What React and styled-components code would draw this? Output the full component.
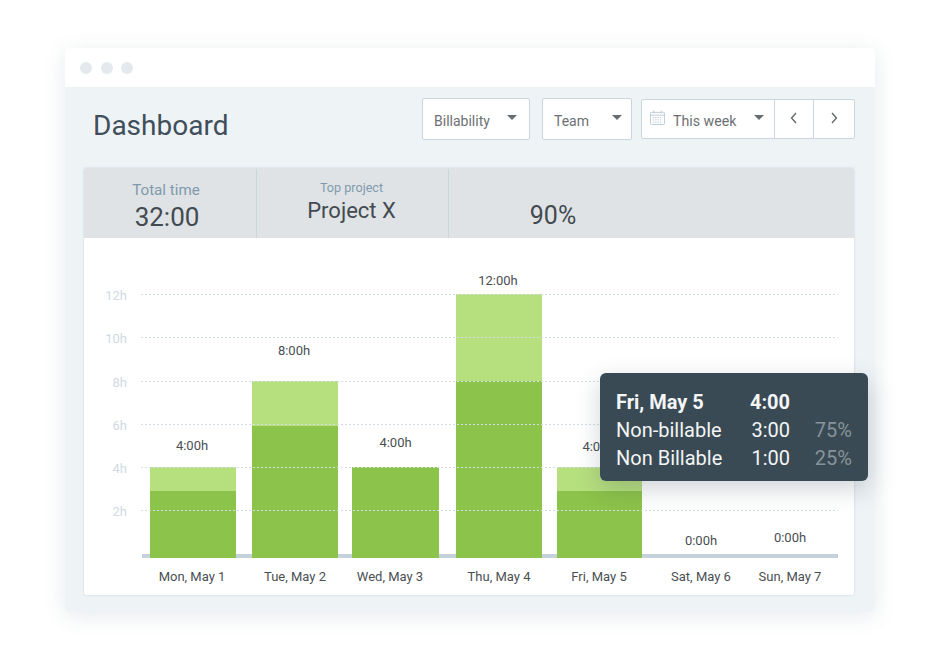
import React from "react";
import styled, { createGlobalStyle } from "styled-components";

const GlobalStyle = createGlobalStyle`
  html, body {
    margin: 0;
    padding: 0;
    background: #fff;
    font-family: Roboto, "Liberation Sans", sans-serif;
  }
  * { box-sizing: border-box; }
`;

const Page = styled.div`
  width: 940px;
  height: 661px;
  padding: 48px 65px 0;
`;

const Window = styled.div`
  width: 810px;
  height: 564px;
  background: #eef3f6;
  border-radius: 5px;
  box-shadow: 0 4px 22px rgba(60, 90, 110, 0.13);
`;

const TitleBar = styled.div`
  height: 39px;
  background: #fff;
  border-radius: 5px 5px 0 0;
  display: flex;
  align-items: center;
  gap: 8.5px;
  padding: 1px 0 0 15px;
`;

const Dot = styled.span`
  width: 12px;
  height: 12px;
  border-radius: 50%;
  background: #e4e9ee;
`;

const Header = styled.div`
  height: 81px;
  display: flex;
  align-items: flex-start;
  padding: 11px 20px 0 28px;
`;

const Title = styled.h1`
  margin: 10px auto 0 0;
  font-size: 28px;
  line-height: 36px;
  font-weight: 400;
  color: #3f4e5a;
`;

const Select = styled.div`
  width: ${(p) => p.$width}px;
  height: 42px;
  margin-left: ${(p) => p.$gap}px;
  padding: 0 ${(p) => p.$pad}px 0 11px;
  display: flex;
  align-items: center;
  justify-content: space-between;
  background: #fff;
  border: 1px solid #c9d6de;
  border-radius: 2px;
  font-size: 14px;
  color: #6c7073;
`;

const SelectText = styled.span`
  margin-top: 4px;
`;

const Caret = styled.span`
  width: 0;
  height: 0;
  margin-top: -3px;
  border-left: 5px solid transparent;
  border-right: 5px solid transparent;
  border-top: 5px solid #666c70;
`;

const WeekGroup = styled.div`
  width: 214px;
  height: 40px;
  margin: 1px 0 0 9px;
  display: flex;
  background: #fff;
  border: 1px solid #c9d6de;
  border-radius: 2px;
  font-size: 14.2px;
  color: #6c7073;
`;

const WeekPicker = styled.div`
  flex: 1;
  display: flex;
  align-items: center;
  padding: 0 10px 0 8px;
  gap: 8px;
`;

const WeekText = styled.span`
  margin: 3px auto 0 0;
`;

const IconSlot = styled.span`
  display: flex;
  margin-top: -3px;
`;

const NavButton = styled.div`
  width: ${(p) => p.$width}px;
  display: flex;
  align-items: center;
  justify-content: center;
  border-left: 1px solid #c9d6de;
  padding-bottom: 2px;
`;

const Panel = styled.div`
  position: relative;
  width: 770px;
  height: 427px;
  margin-left: 19px;
  background: #fff;
  box-shadow: 0 0 2px rgba(120, 150, 170, 0.45);
  border-radius: 2px;
`;

const StatsBand = styled.div`
  height: 70px;
  display: flex;
  background: #dfe3e6;
  border-radius: 2px 2px 0 0;
`;

const StatCell = styled.div`
  width: ${(p) => p.$width}px;
  height: 69px;
  margin-top: 1px;
  border-right: ${(p) => (p.$last ? "none" : "1px solid #c9d6e0")};
  display: flex;
  flex-direction: column;
  align-items: center;
  padding-top: ${(p) => p.$top}px;
  padding-right: ${(p) => p.$inset || 0}px;
`;

const StatLabel = styled.div`
  font-size: ${(p) => p.$size}px;
  line-height: 18px;
  color: #7f9aad;
  margin-right: ${(p) => p.$nudge || 0}px;
`;

const StatValue = styled.div`
  font-size: ${(p) => p.$size}px;
  line-height: 30px;
  color: #434a4f;
  margin-top: ${(p) => p.$top || 0}px;
`;

const Chart = styled.div`
  position: relative;
  height: 357px;
`;

const GridOverlay = styled.div`
  position: absolute;
  z-index: 2;
  left: 0;
  top: 56px;
  width: 754px;
  display: flex;
  flex-direction: column;
  pointer-events: none;
`;

const GridRow = styled.div`
  height: 43.3px;
  display: flex;
  align-items: flex-start;
`;

const GridLabel = styled.span`
  width: 43px;
  margin-top: -7px;
  line-height: 18px;
  text-align: right;
  font-size: 13px;
  color: #cfdae2;
`;

const GridLine = styled.span`
  flex: 1;
  margin-left: 14px;
  height: 1px;
  background: repeating-linear-gradient(to right, #d3dde4 0 2px, transparent 2px 4px);
`;

const BaseLine = styled.div`
  position: absolute;
  left: 58px;
  top: 316px;
  width: 696px;
  height: 4px;
  background: #c5d2dc;
`;

const Columns = styled.div`
  position: relative;
  height: 357px;
  display: flex;
  padding-left: 66px;
`;

const Column = styled.div`
  width: ${(p) => p.$width}px;
  margin-left: ${(p) => p.$gap}px;
  display: flex;
  flex-direction: column;
  justify-content: flex-end;
  align-items: center;
  padding-bottom: 37px;
`;

const ValueLabel = styled.div`
  font-size: 13px;
  line-height: 18px;
  color: #4a4f53;
  margin-bottom: ${(p) => p.$lift}px;
  margin-right: ${(p) => p.$nudge}px;
`;

const BarSegment = styled.div`
  width: 100%;
  height: ${(p) => p.$height}px;
  background: ${(p) => (p.$light ? "#b6df7e" : "#8cc34a")};
`;

const DayLabel = styled.div`
  position: absolute;
  top: 330px;
  left: ${(p) => p.$center}px;
  font-size: 13px;
  line-height: 18px;
  color: #4a4f53;
  white-space: nowrap;
  transform: translateX(-50%);
`;

const Tooltip = styled.div`
  position: absolute;
  z-index: 3;
  left: 516px;
  top: 205px;
  width: 268px;
  height: 108px;
  padding: 15px 16px 0;
  display: grid;
  grid-template-columns: 118px 56px 62px;
  grid-auto-rows: 28px;
  align-items: center;
  background: #394a54;
  border-radius: 6px;
  box-shadow: 0 8px 24px rgba(40, 60, 75, 0.22);
  font-size: 20px;
  color: #f3f5f6;
`;

const TipCell = styled.span`
  font-weight: ${(p) => (p.$bold ? 700 : 400)};
  text-align: ${(p) => (p.$right ? "right" : "left")};
  color: ${(p) => (p.$muted ? "#87939a" : "inherit")};
  white-space: nowrap;
`;

const CalendarIcon = () => (
  <svg width="15" height="15" viewBox="0 0 16 16" fill="none" stroke="#b9cbd8" strokeWidth="1">
    <rect x="0.5" y="2.5" width="15" height="13" rx="1" />
    <path d="M0.5 5.5h15M4 0.5v3M12 0.5v3" />
    <path d="M3 8h10M3 10.5h10M3 13h10" strokeDasharray="1.5 1" />
  </svg>
);

const Chevron = ({ d }) => (
  <svg width="8" height="12" viewBox="0 0 8 12" fill="none" stroke="#5e6468" strokeWidth="1.3">
    <path d={d} />
  </svg>
);

const hours = ["12h", "10h", "8h", "6h", "4h", "2h"];

const days = [
  { width: 86, gap: 0, value: "4:00h", lift: 12, nudge: 2, dark: 67, light: 24, label: "Mon, May 1", center: 108 },
  { width: 86, gap: 16, value: "8:00h", lift: 21, nudge: 2, dark: 132, light: 45, label: "Tue, May 2", center: 211 },
  { width: 87, gap: 14, value: "4:00h", lift: 15, nudge: 0, dark: 91, light: 0, label: "Wed, May 3", center: 306 },
  { width: 86, gap: 17, value: "12:00h", lift: 4, nudge: 2, dark: 177, light: 87, label: "Thu, May 4", center: 415 },
  { width: 85, gap: 15, value: "4:00h", lift: 11, nudge: 2, dark: 67, light: 24, label: "Fri, May 5", center: 515 },
  { width: 86, gap: 16, value: "0:00h", lift: 8, nudge: 0, dark: 0, light: 0, label: "Sat, May 6", center: 617 },
  { width: 86, gap: 3, value: "0:00h", lift: 11, nudge: 0, dark: 0, light: 0, label: "Sun, May 7", center: 706 },
];

const App = () => {
  return (
    <Page>
      <GlobalStyle />
      <Window>
        <TitleBar>
          <Dot />
          <Dot />
          <Dot />
        </TitleBar>
        <Header>
          <Title>Dashboard</Title>
          <Select $width={108} $gap={0} $pad={12}>
            <SelectText>Billability</SelectText>
            <Caret />
          </Select>
          <Select $width={90} $gap={12} $pad={9}>
            <SelectText>Team</SelectText>
            <Caret />
          </Select>
          <WeekGroup>
            <WeekPicker>
              <IconSlot>
                <CalendarIcon />
              </IconSlot>
              <WeekText>This week</WeekText>
              <Caret />
            </WeekPicker>
            <NavButton $width={39}>
              <Chevron d="M6 1 1.5 6 6 11" />
            </NavButton>
            <NavButton $width={41}>
              <Chevron d="M2 1 6.5 6 2 11" />
            </NavButton>
          </WeekGroup>
        </Header>
        <Panel>
          <StatsBand>
            <StatCell $width={173} $top={12} $inset={6}>
              <StatLabel $size={15.2} $nudge={2}>Total time</StatLabel>
              <StatValue $size={26} $top={3}>32:00</StatValue>
            </StatCell>
            <StatCell $width={192} $top={10} $inset={2}>
              <StatLabel $size={12.6}>Top project</StatLabel>
              <StatValue $size={22} $top={-1}>Project X</StatValue>
            </StatCell>
            <StatCell $width={209} $top={32} $inset={1} $last>
              <StatValue $size={25}>90%</StatValue>
            </StatCell>
          </StatsBand>
          <Chart>
            <BaseLine />
            <Columns>
              {days.map((day) => (
                <Column key={day.label} $width={day.width} $gap={day.gap}>
                  <ValueLabel $lift={day.lift} $nudge={day.nudge}>{day.value}</ValueLabel>
                  {day.light > 0 && <BarSegment $height={day.light} $light />}
                  {day.dark > 0 && <BarSegment $height={day.dark} />}
                </Column>
              ))}
              {days.map((day) => (
                <DayLabel key={day.label} $center={day.center}>
                  {day.label}
                </DayLabel>
              ))}
            </Columns>
            <GridOverlay>
              {hours.map((hour) => (
                <GridRow key={hour}>
                  <GridLabel>{hour}</GridLabel>
                  <GridLine />
                </GridRow>
              ))}
            </GridOverlay>
          </Chart>
          <Tooltip>
            <TipCell $bold>Fri, May 5</TipCell>
            <TipCell $bold $right>4:00</TipCell>
            <TipCell />
            <TipCell>Non-billable</TipCell>
            <TipCell $right>3:00</TipCell>
            <TipCell $right $muted>75%</TipCell>
            <TipCell>Non Billable</TipCell>
            <TipCell $right>1:00</TipCell>
            <TipCell $right $muted>25%</TipCell>
          </Tooltip>
        </Panel>
      </Window>
    </Page>
  );
};

export default App;
